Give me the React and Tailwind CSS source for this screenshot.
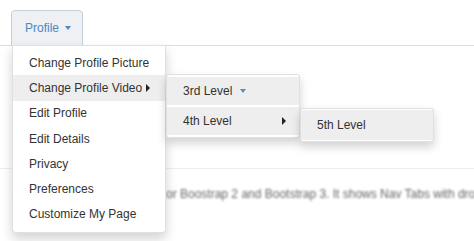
import React from 'react';

const CaretDown = ({ color = 'border-t-[#5b8ec4]' }) => (
    <span className={`inline-block w-0 h-0 border-x-[3.5px] border-x-transparent border-t-[4px] ${color} align-middle`} />
);

const CaretRight = () => (
    <span className="inline-block w-0 h-0 border-y-[4px] border-y-transparent border-l-[4px] border-l-[#222] align-middle" />
);

const menuItems = [
    'Change Profile Picture',
    'Change Profile Video',
    'Edit Profile',
    'Edit Details',
    'Privacy',
    'Preferences',
    'Customize My Page',
];

const FifthLevel = () => (
    <div className="absolute left-[133px] top-[1px] w-[134px] bg-white border border-[rgba(0,0,0,0.12)] rounded-[3px] shadow-[0_5px_10px_rgba(0,0,0,0.18)] py-[1px]">
        <div className="h-[30px] flex items-center px-[16px] bg-[#eeeeee]">5th Level</div>
    </div>
);

const ThirdLevel = () => (
    <div className="absolute left-[153px] -top-[1px] w-[134px] bg-white border border-[rgba(0,0,0,0.12)] rounded-[3px] shadow-[0_5px_10px_rgba(0,0,0,0.18)] pt-[2px] pb-[2px] flex flex-col gap-[2px]">
        <div className="h-[28px] flex items-center gap-[8px] px-[16px] bg-[#eeeeee]">
            3rd Level <CaretDown />
        </div>
        <div className="relative h-[28px] flex items-center justify-between pl-[16px] pr-[13px] bg-[#eeeeee]">
            4th Level <CaretRight />
            <FifthLevel />
        </div>
    </div>
);

export default function App() {
    return (
        <div className="relative w-[474px] h-[241px] overflow-hidden bg-white text-[12px] text-[#333] font-['Liberation_Sans',Arial,sans-serif]">
            {/* nav tabs */}
            <div className="flex pl-[11px] pt-[10px] border-b border-[#dddddd]">
                <div className="-mb-px h-[36px] w-[72px] flex items-center gap-[6px] pl-[13px] border border-[#c5d0db] rounded-t-[4px] bg-[#eef0f3] text-[#4f87bf]">
                    Profile <CaretDown color="border-t-[#4f87bf]" />
                </div>
            </div>

            {/* page content behind the menu */}
            <div className="mt-[122px] border-t border-[#eeeeee]">
                <p className="pt-[16px] pl-[12px] whitespace-nowrap text-[#666] blur-[0.9px]">
                    <span className="inline-block w-[154px] overflow-hidden align-bottom">.</span>
                    or Boostrap 2 and Bootstrap 3. It shows Nav Tabs with dropdown menus
                </p>
            </div>

            {/* dropdown */}
            <div className="absolute left-[12px] top-[45px] w-[154px] bg-white border border-[rgba(0,0,0,0.12)] rounded-b-[4px] shadow-[0_6px_12px_rgba(0,0,0,0.175)] pt-[4px] pb-[5px]">
                {menuItems.map((label, i) => (
                    <div
                        key={label}
                        className={`relative h-[25.3px] flex items-center px-[16px] whitespace-nowrap ${i === 1 ? 'bg-[#eeeeee]' : ''}`}
                    >
                        {label}
                        {i === 1 && (
                            <>
                                <span className="ml-[4px] flex"><CaretRight /></span>
                                <ThirdLevel />
                            </>
                        )}
                    </div>
                ))}
            </div>
        </div>
    );
}
